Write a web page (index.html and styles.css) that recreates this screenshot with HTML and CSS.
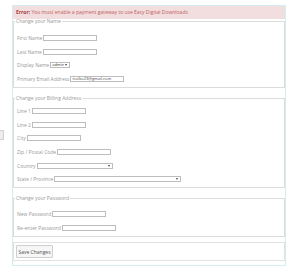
FILE: index.html
```html
<!DOCTYPE html>
<html lang="en">
<head>
  <meta charset="UTF-8">
  <title>Profile Editor</title>
  <link rel="stylesheet" href="styles.css">
</head>
<body>
<div class="side-tab"></div>
<div class="wrap">
  <div class="alert"><strong>Error:</strong> You must enable a payment gateway to use Easy Digital Downloads</div>
  <form class="profile-form">
    <fieldset class="box">
      <legend>Change your Name</legend>
      <p class="row"><label>First Name</label><input type="text" class="field"></p>
      <p class="row"><label>Last Name</label><input type="text" class="field"></p>
      <p class="row"><label>Display Name</label><span class="pick pick-name"><select><option>admin</option></select></span></p>
      <p class="row"><label>Primary Email Address</label><input type="email" class="field" value="tcolko23@gmail.com"></p>
    </fieldset>
    <fieldset class="box box-billing">
      <legend>Change your Billing Address</legend>
      <p class="row"><label>Line 1</label><input type="text" class="field"></p>
      <p class="row"><label>Line 2</label><input type="text" class="field"></p>
      <p class="row"><label>City</label><input type="text" class="field"></p>
      <p class="row"><label>Zip / Postal Code</label><input type="text" class="field"></p>
      <p class="row"><label>Country</label><span class="pick pick-country"><select><option></option></select></span></p>
      <p class="row"><label>State / Province</label><span class="pick pick-state"><select><option></option></select></span></p>
    </fieldset>
    <fieldset class="box box-pass">
      <legend>Change your Password</legend>
      <p class="row"><label>New Password</label><input type="password" class="field"></p>
      <p class="row"><label>Re-enter Password</label><input type="password" class="field"></p>
    </fieldset>
    <div class="actions">
      <button type="button" class="btn">Save Changes</button>
    </div>
  </form>
</div>
</body>
</html>
```

FILE: styles.css
```css
body {
  margin: 0;
  background: #fff;
  font-family: "Open Sans", "Liberation Sans", sans-serif;
  font-size: 5px;
  color: #999;
}
.side-tab {
  position: absolute;
  left: 0;
  top: 130px;
  width: 3px;
  height: 8px;
  background: #eee;
  border: 1px solid #d0d0d0;
  border-left: none;
}
.wrap {
  width: 272px;
  margin: 5px 0 0 12px;
  border: 1px solid #d3edf3;
  padding-bottom: 4px;
}
.alert {
  height: 13px;
  line-height: 13px;
  padding-left: 3px;
  background: #f2dede;
  color: #c0605e;
  white-space: nowrap;
}
.alert strong {
  color: #a33c39;
}
.box {
  margin: 0;
  min-width: 0;
  border: 1px solid #dcdcdc;
  padding: 10px 3px 4px;
  display: flex;
  flex-direction: column;
  gap: 5.6px;
}
.box + .box {
  margin-top: 8px;
}
.box-billing {
  padding-top: 6.5px;
}
.box-pass {
  padding-top: 9px;
}
.box legend {
  line-height: 5px;
  padding: 0 1px;
  margin-left: -2px;
}
.row {
  margin: 0;
  height: 8px;
  display: flex;
  align-items: center;
  gap: 1px;
  line-height: 8px;
}
.field {
  width: 54px;
  height: 6px;
  box-sizing: border-box;
  margin: 0;
  padding: 0 1px;
  border: 1px solid #bdbdbd;
  font: 4px "Open Sans", sans-serif;
  color: #444;
}
.pick {
  position: relative;
  display: block;
  height: 6px;
}
.pick select {
  appearance: none;
  display: block;
  width: 100%;
  height: 6px;
  box-sizing: border-box;
  margin: 0;
  padding: 0 1px;
  border: 1px solid #bdbdbd;
  border-radius: 0;
  font: 4px/4px "Open Sans", sans-serif;
  color: #333;
  background: #fff;
}
.pick::after {
  content: "";
  position: absolute;
  right: 3px;
  top: 2px;
  border-left: 1.5px solid transparent;
  border-right: 1.5px solid transparent;
  border-top: 2px solid #444;
}
.pick-name {
  width: 20px;
}
.pick-country {
  width: 76px;
}
.pick-state {
  width: 127px;
}
.actions {
  margin-top: 5.5px;
  border: 1px solid #e2e2e2;
  padding: 2px;
}
.btn {
  display: block;
  width: 37px;
  height: 13px;
  margin: 0;
  padding: 0;
  border: 1px solid #cfcfcf;
  border-radius: 1px;
  background: #f6f6f6;
  font: 5px "Open Sans", sans-serif;
  color: #555;
}
```
